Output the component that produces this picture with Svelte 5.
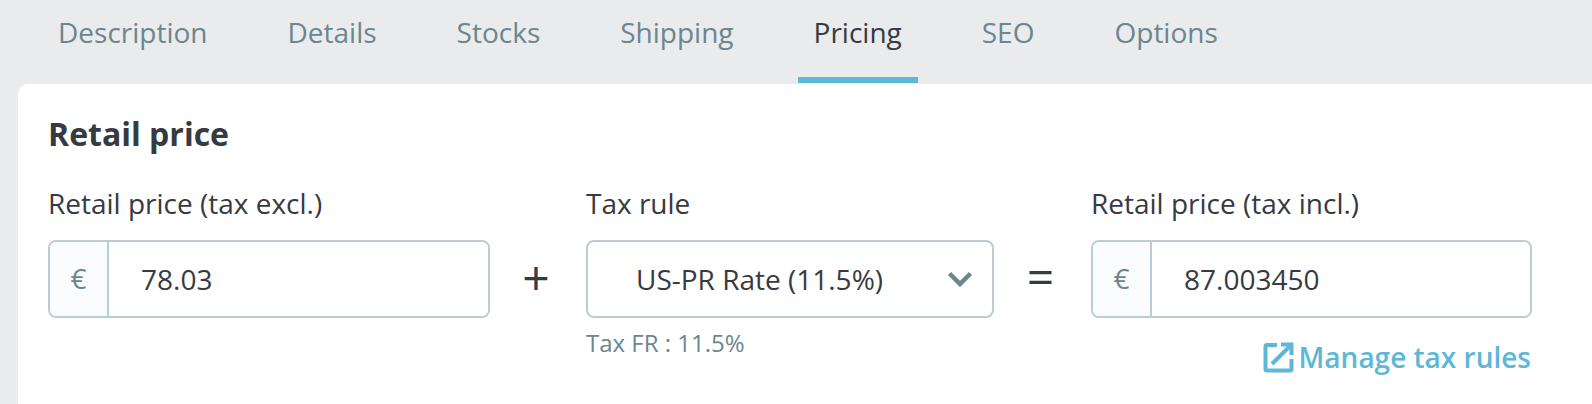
<script>
  const tabs = ["Description", "Details", "Stocks", "Shipping", "Pricing", "SEO", "Options"];
  let active = "Pricing";
</script>

<div class="page">
  <nav class="tabs">
    {#each tabs as tab}
      <a href="#{tab}" class="tab" class:active={tab === active}>{tab}</a>
    {/each}
  </nav>

  <section class="card">
    <h2>Retail price</h2>
    <div class="row">
      <div class="field excl">
        <label for="excl">Retail price (tax excl.)</label>
        <div class="input-group">
          <span class="prefix">€</span>
          <input id="excl" type="text" value="78.03" />
        </div>
      </div>

      <span class="op plus">+</span>

      <div class="field rule">
        <label for="rule">Tax rule</label>
        <div class="select" id="rule">
          <span>US-PR Rate (11.5%)</span>
          <svg width="26" height="16" viewBox="0 0 26 16" fill="none">
            <path d="M2.5 2.5 L13 13 L23.5 2.5" stroke="#6c868e" stroke-width="4.5" />
          </svg>
        </div>
        <small>Tax FR : 11.5%</small>
      </div>

      <span class="op equals">=</span>

      <div class="field incl">
        <label for="incl">Retail price (tax incl.)</label>
        <div class="input-group">
          <span class="prefix">€</span>
          <input id="incl" type="text" value="87.003450" />
        </div>
        <a class="manage" href="#rules">
          <svg width="31" height="31" viewBox="0 0 31 31" fill="none" stroke="#5cb8d6" stroke-width="4">
            <path d="M14 3 H4 Q2.5 3 2.5 4.5 V27 Q2.5 28.5 4 28.5 H27 Q28.5 28.5 28.5 27 V17" />
            <path d="M9 22 L27 4" />
            <path d="M18 2.5 H28.5 V13" />
          </svg>
          Manage tax rules
        </a>
      </div>
    </div>
  </section>
</div>

<style>
  :global(body) { margin: 0; background: #eaebed; }
  .page { height: 404px; overflow: hidden; font-family: "Open Sans", sans-serif; font-size: 28px; color: #363a41; }

  .tabs { display: flex; height: 84px; padding-left: 42px; gap: 48px; box-sizing: border-box; }
  .tab { padding: 0 16px; height: 83px; box-sizing: border-box; line-height: 64px; color: #6c868e; text-decoration: none; white-space: nowrap; }
  .tab.active { color: #363a41; border-bottom: 6px solid #5cb8d6; }

  .card { margin-left: 18px; height: 320px; box-sizing: border-box; padding: 30px 0 0 30px; background: #fff; border-radius: 10px 0 0 0; }
  h2 { margin: 0 0 31px; font-size: 32px; line-height: 40px; font-weight: 700; }

  .row { display: flex; align-items: flex-start; }
  .field { display: flex; flex-direction: column; }
  .excl { width: 442px; }
  .rule { width: 408px; }
  .incl { width: 441px; }
  label { line-height: 36px; margin-bottom: 19px; }

  .input-group { display: flex; height: 78px; box-sizing: border-box; border: 2px solid #bbcdd2; border-radius: 8px; overflow: hidden; }
  .prefix { width: 59px; flex: none; box-sizing: border-box; text-align: center; line-height: 73px; color: #6c868e; background: #fafbfc; border-right: 2px solid #bbcdd2; }
  input { flex: 1; min-width: 0; border: none; outline: none; padding: 0 0 1px 32px; font: inherit; color: inherit; background: #fff; }

  .select { display: flex; align-items: center; justify-content: space-between; height: 78px; box-sizing: border-box; padding: 0 19px 0 48px; border: 2px solid #bbcdd2; border-radius: 8px; }
  small { margin-top: 10px; font-size: 24px; line-height: 30px; color: #6c868e; }

  .op { flex: none; box-sizing: border-box; padding-right: 4px; text-align: center; font-size: 48px; font-weight: 500; line-height: 78px; }
  .plus { width: 96px; margin-top: 53px; }
  .equals { width: 97px; margin-top: 52px; }

  .manage { display: flex; align-items: center; justify-content: flex-end; gap: 5px; margin: 21px 1px 0 0; font-weight: 600; color: #5cb8d6; text-decoration: none; line-height: 36px; }
</style>
